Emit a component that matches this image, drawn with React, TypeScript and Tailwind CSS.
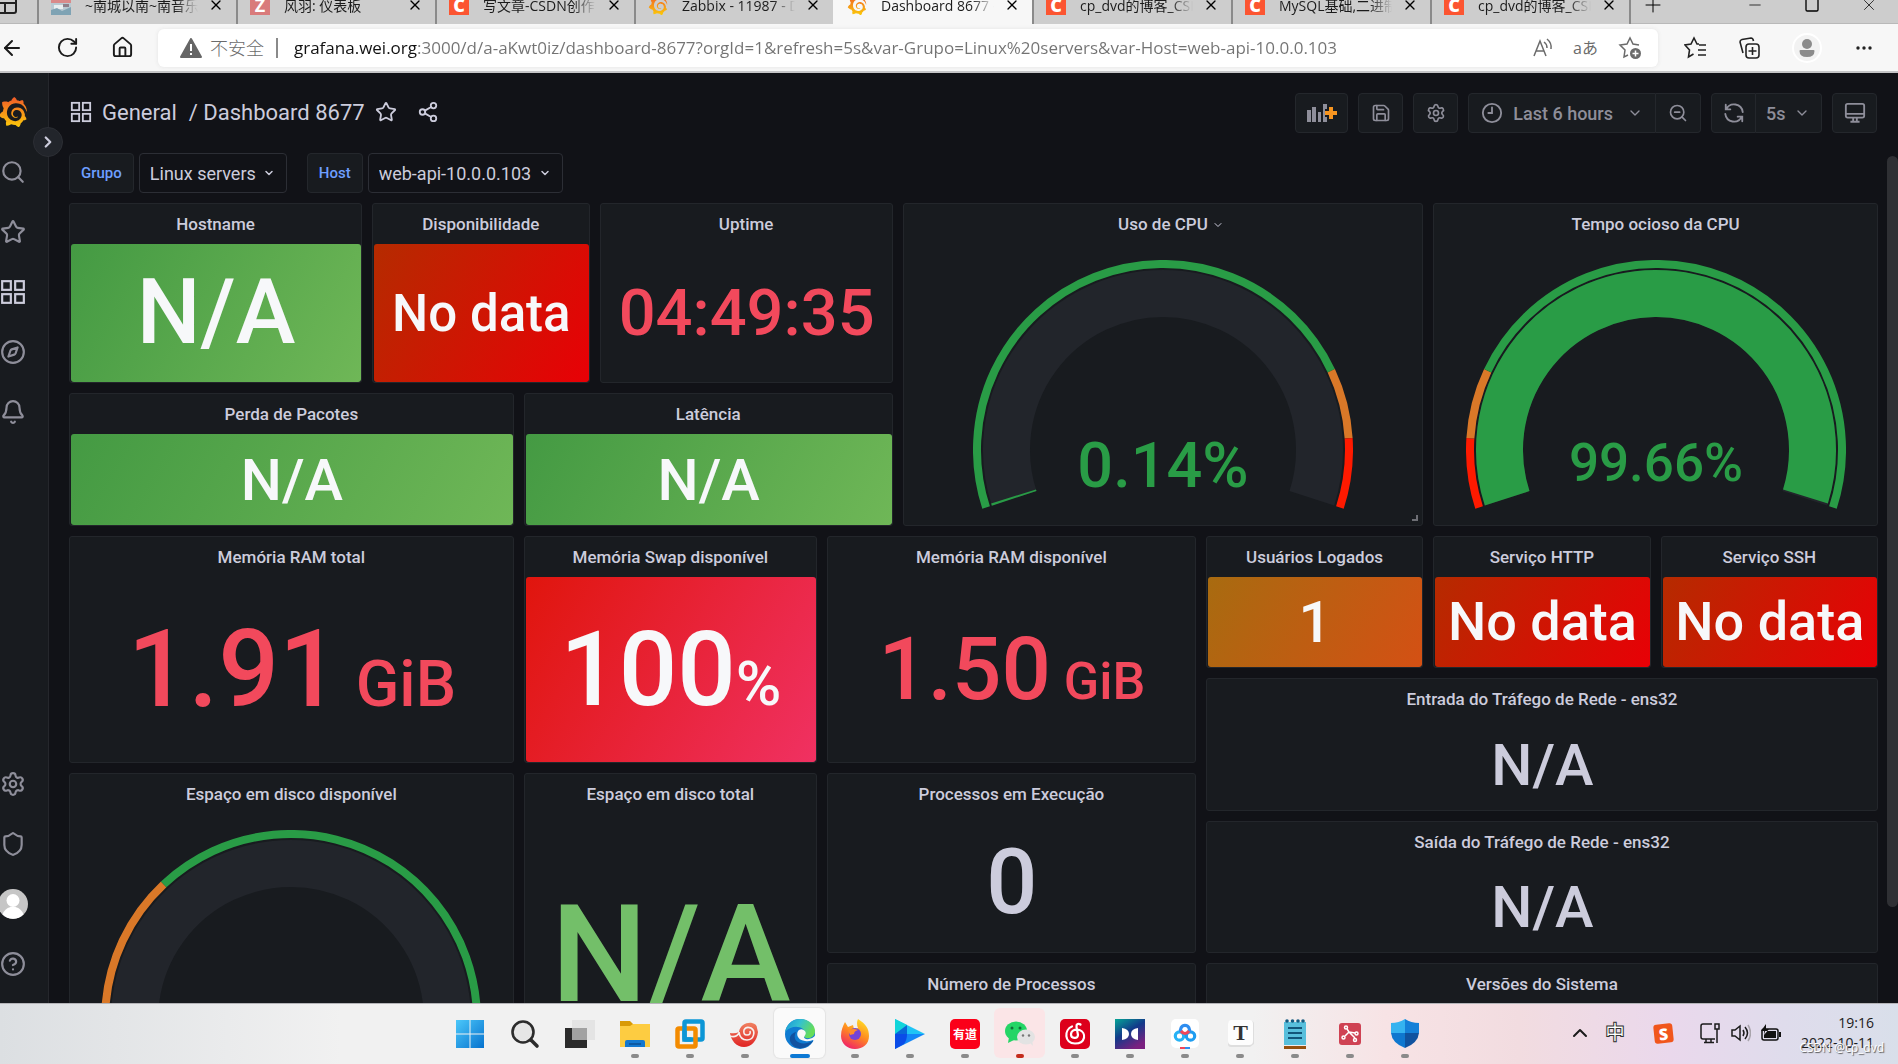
import React, { useState } from "react";
import clsx from "clsx";
import {
  ArrowLeft,
  Bell,
  ChevronDown,
  ChevronRight,
  ChevronUp,
  CircleHelp,
  Compass,
  House,
  Minus,
  Plus,
  RotateCw,
  Save,
  Search,
  Settings,
  Share2,
  Shield,
  Square,
  Star,
  X,
  ZoomOut,
} from "lucide-react";
import { SiGrafana } from "react-icons/si";

const GREEN = "#299c46";
const ORANGE = "#d97828";
const RED = "#ff1a00";

const UI_FONT = "font-['Open_Sans','Noto_Sans_CJK_SC',sans-serif]";

/* ---------- browser ---------- */

const GrafanaLogo = ({ className }: { className?: string }) => (
  <SiGrafana className={className} fill="url(#grafana-gradient)" />
);

const CsdnLogo = () => (
  <span className="flex size-5 items-center justify-center bg-[#fc5531] text-lg leading-none font-extrabold text-white">
    C
  </span>
);

const ZabbixLogo = () => (
  <span className="flex size-5 items-center justify-center bg-[#d97b7b] text-lg leading-none font-bold text-white">
    Z
  </span>
);

const PictureLogo = () => (
  <svg viewBox="0 0 20 20" className="size-5">
    <rect width="20" height="20" fill="#b9c9d2" />
    <path d="M0 5h20v3H0z" fill="#d98a8a" />
    <path d="M3 10h9v4H3z" fill="#e8eef0" />
    <path d="M0 15l6-2 5 3 9-4v8H0z" fill="#7fa3b4" />
    <path d="M12 9h6v3h-6z" fill="#8f7f8a" />
  </svg>
);

interface ITab {
  title: string;
  icon: React.ReactNode;
  active?: boolean;
}

const tabs: ITab[] = [
  { title: "~南城以南~南音乐", icon: <PictureLogo /> },
  { title: "风羽: 仪表板", icon: <ZabbixLogo /> },
  { title: "写文章-CSDN创作", icon: <CsdnLogo /> },
  { title: "Zabbix - 11987 - D", icon: <GrafanaLogo className="size-5" /> },
  { title: "Dashboard 8677 - G", icon: <GrafanaLogo className="size-5" />, active: true },
  { title: "cp_dvd的博客_CSD", icon: <CsdnLogo /> },
  { title: "MySQL基础,二进制", icon: <CsdnLogo /> },
  { title: "cp_dvd的博客_CSD", icon: <CsdnLogo /> },
];

const Tab = ({ title, icon, active }: ITab) => (
  <div
    className={clsx(
      "flex h-[38px] w-[199px] min-w-0 items-center border-l-2 px-3",
      active ? "border-[#f7f7f7] bg-[#f7f7f7]" : "border-[#8a8a8a] bg-[#cdcdcd]"
    )}
  >
    {icon}
    <span className="ml-3.5 min-w-0 flex-1 overflow-hidden text-[14px] whitespace-nowrap text-[#1b1b1b] [mask-image:linear-gradient(to_right,black_80%,transparent)]">
      {title}
    </span>
    <button type="button" aria-label="关闭标签页" className="ml-2.5">
      <X className="size-4" strokeWidth={2} />
    </button>
  </div>
);

const TabStrip = () => (
  <div className="flex h-6 items-end justify-between overflow-hidden bg-[#cdcdcd] shadow-[inset_0_-1px_0_#b9b9b9]">
    <div className="flex items-end">
      <button type="button" aria-label="标签页" className="flex h-[38px] w-[37px] items-center">
        <svg viewBox="0 0 20 20" className="size-5" fill="none" stroke="#222" strokeWidth="2">
          <rect x="-2" y="3" width="18" height="15" rx="2" />
          <path d="M5 8v10M-2 8h18" />
        </svg>
      </button>
      {tabs.map((tab, index) => (
        <Tab key={index} {...tab} />
      ))}
      <button
        type="button"
        aria-label="新建标签页"
        className="flex h-[38px] items-center border-l-2 border-[#8a8a8a] pl-2.5"
      >
        <Plus className="size-6" strokeWidth={1} />
      </button>
    </div>
    <div className="flex h-[38px] items-center gap-10 pr-5 text-black">
      <button type="button" aria-label="最小化">
        <Minus className="size-[18px]" strokeWidth={1} />
      </button>
      <button type="button" aria-label="最大化">
        <Square className="size-4" strokeWidth={2} />
      </button>
      <button type="button" aria-label="关闭">
        <X className="size-[18px]" strokeWidth={1} />
      </button>
    </div>
  </div>
);

const AddressBar = () => {
  const [url, setUrl] = useState<string>(
    "grafana.wei.org:3000/d/a-aKwt0iz/dashboard-8677?orgId=1&refresh=5s&var-Grupo=Linux%20servers&var-Host=web-api-10.0.0.103"
  );

  return (
    <div className="flex h-[49px] items-center border-b-2 border-[#c4c4c6] bg-[#f7f7f7] pr-[22px] text-[#1b1b1b]">
      <div className="flex w-[158px] shrink-0 items-center gap-8">
        <button type="button" aria-label="后退">
          <ArrowLeft className="size-6" strokeWidth={2} />
        </button>
        <button type="button" aria-label="刷新">
          <RotateCw className="size-[23px]" strokeWidth={2} />
        </button>
        <button type="button" aria-label="主页">
          <House className="size-[23px]" strokeWidth={2} />
        </button>
      </div>

      <div className="flex h-[38px] min-w-0 flex-1 items-center rounded-md bg-white pr-4 pl-[22px] text-[#6b6b6b] shadow-[0_0_4px_#e4e4e4]">
        <svg viewBox="0 0 22 20" className="h-5 w-[22px]">
          <path d="M11 1L21 19H1z" fill="#666" stroke="#666" strokeWidth="2" strokeLinejoin="round" />
          <path d="M11 6v7M11 15v2" stroke="#fff" strokeWidth="2" />
        </svg>
        <span className="ml-2 text-lg font-light whitespace-nowrap">不安全</span>
        <span className="ml-3 h-5 w-0.5 bg-[#8a8a8a]" />
        <input
          aria-label="地址"
          value={url}
          onChange={(e) => setUrl(e.target.value)}
          className="ml-4 min-w-0 flex-1 bg-[linear-gradient(to_right,#111_123px,#737373_123px)] bg-clip-text text-[17px] text-transparent outline-none"
        />
        <div className="flex items-center gap-5">
          <button type="button" aria-label="大声朗读">
            <svg viewBox="0 0 20 20" className="size-5" fill="none" stroke="#6b6b6b" strokeWidth="1.5">
              <path d="M1 18L7 3l6 15M3 13h8" />
              <path d="M11 4q3 2 3 6M14 1q5 4 4 10" />
            </svg>
          </button>
          <button type="button" aria-label="翻译" className="text-base">
            aあ
          </button>
          <button type="button" aria-label="收藏">
            <svg viewBox="0 0 24 24" className="size-6" fill="none" stroke="#6b6b6b" strokeWidth="1.5">
              <path d="M21 9l-6-1-3-6-3 6-7 1 5 5-1 7 4-2" />
              <circle cx="17.500" cy="17.500" r="5.500" fill="#6b6b6b" stroke="none" />
              <path d="M17.500 14.500v6M14.500 17.500h6" stroke="#fff" />
            </svg>
          </button>
        </div>
      </div>

      <div className="ml-[26px] flex shrink-0 items-center gap-[30px]">
        <button type="button" aria-label="收藏夹">
          <svg viewBox="0 0 24 24" className="size-6" fill="none" stroke="#222" strokeWidth="1.600">
            <path d="M15 8l-2-0-3-6-3 6-6 1 4.500 5-1 7 5-3" />
            <path d="M15 9h7M14 14h8M14 19h8" />
          </svg>
        </button>
        <button type="button" aria-label="集锦">
          <svg viewBox="0 0 24 24" className="size-6" fill="none" stroke="#222" strokeWidth="1.600">
            <rect x="8" y="8" width="13" height="14" rx="3" />
            <path d="M14.500 11v8M10.500 15h8M5 17L2 6q0-2 2-2.500L13 2q2 0 2.500 3" />
          </svg>
        </button>
        <button
          type="button"
          aria-label="用户"
          className="flex size-[30px] items-center justify-center rounded-full border-2 border-white bg-[#f2f2f2]"
        >
          <svg viewBox="0 0 20 20" className="size-5" fill="#8b8b8b">
            <circle cx="10" cy="6" r="5" />
            <path d="M2.500 13q0-1 1-1h13q1 0 1 1 0 6-7.500 6t-7.500-6z" />
          </svg>
        </button>
        <button type="button" aria-label="设置及其他">
          <svg viewBox="0 0 24 24" className="size-6" fill="#222">
            <circle cx="6" cy="12" r="1.700" />
            <circle cx="12" cy="12" r="1.700" />
            <circle cx="18" cy="12" r="1.700" />
          </svg>
        </button>
      </div>
    </div>
  );
};

/* ---------- dashboard ---------- */

const AppsIcon = ({ className }: { className?: string }) => (
  <svg viewBox="0 0 24 24" className={className} fill="none" stroke="currentColor" strokeWidth="2">
    <rect x="2" y="2" width="8" height="8" />
    <rect x="14" y="2" width="8" height="8" />
    <rect x="2" y="14" width="8" height="8" />
    <rect x="14" y="14" width="8" height="8" />
  </svg>
);

const Sidebar = () => (
  <nav className="relative flex w-[49px] shrink-0 flex-col justify-between border-r border-[#25272c] bg-[#181b1f] pt-6 pb-[26px] text-[#8e8e9a]">
    <div className="flex w-[26px] flex-col items-center gap-[34px]">
      <a href="#home" aria-label="Home">
        <GrafanaLogo className="-mb-0.5 size-[30px]" />
      </a>
      <a href="#search" aria-label="Search"><Search className="size-[26px]" /></a>
      <a href="#starred" aria-label="Starred"><Star className="size-[26px]" /></a>
      <a href="#dashboards" aria-label="Dashboards"><AppsIcon className="size-[26px] text-[#ccccdc]" /></a>
      <a href="#explore" aria-label="Explore"><Compass className="size-[26px]" /></a>
      <a href="#alerting" aria-label="Alerting"><Bell className="size-[26px]" /></a>
    </div>
    <div className="flex w-[26px] flex-col items-center gap-[34px]">
      <a href="#config" aria-label="Configuration"><Settings className="size-[26px]" /></a>
      <a href="#admin" aria-label="Server admin"><Shield className="size-[26px]" /></a>
      <a href="#profile" aria-label="Profile">
        <svg viewBox="0 0 30 30" className="-m-0.5 size-[30px]">
          <circle cx="15" cy="15" r="15" fill="#c6c6c6" />
          <circle cx="15" cy="11.500" r="6.500" fill="#fff" />
          <path d="M4.500 25.500q2-6 8-7.500h5q6 1.500 8 7.500A15 15 0 0 1 4.500 25.500z" fill="#fff" />
        </svg>
      </a>
      <a href="#help" aria-label="Help"><CircleHelp className="size-[26px]" /></a>
    </div>
    <button
      type="button"
      aria-label="Expand menu"
      className="absolute top-[54px] -right-[15px] flex size-[30px] items-center justify-center rounded-full border border-[#2c2e34] bg-[#22252b] text-[#ccccdc]"
    >
      <ChevronRight className="size-[18px]" strokeWidth={3} />
    </button>
  </nav>
);

const toolButton =
  "flex h-10 items-center justify-center rounded-sm border border-[#24272c] bg-[#181b1f] text-[#8e8e9a]";

const Toolbar = () => (
  <header className="flex h-20 items-center justify-between text-[#ccccdc]">
    <div className="flex items-center pb-0.5">
      <AppsIcon className="ml-px size-[22px]" />
      <h1 className="ml-2.5 flex gap-3 text-[22px]">
        <a href="#general">General</a>
        <span>/ Dashboard 8677</span>
      </h1>
      <button type="button" aria-label="Mark as favorite" className="ml-2.5">
        <Star className="size-[22px]" />
      </button>
      <button type="button" aria-label="Share dashboard" className="ml-5">
        <Share2 className="size-[22px]" />
      </button>
    </div>

    <div className="flex gap-2.5 pr-px text-[18px] font-medium">
      <button type="button" aria-label="Add panel" className={clsx(toolButton, "w-[53px]")}>
        <svg viewBox="0 0 32 20" className="h-5 w-8" fill="currentColor">
          <path d="M1 7h4v12H1zM6 4h4v15H6zM12 9h3v10h-3zM17 1h4v5h-2v8h2v5h-4z" />
          <path d="M23 4h4v4h4v4h-4v4h-4v-4h-4V8h4z" fill="#f79520" />
        </svg>
      </button>
      <button type="button" aria-label="Save dashboard" className={clsx(toolButton, "w-[45px]")}>
        <Save className="size-5" />
      </button>
      <button type="button" aria-label="Dashboard settings" className={clsx(toolButton, "w-[45px]")}>
        <Settings className="size-5" />
      </button>
      <div className="flex">
        <button type="button" className={clsx(toolButton, "rounded-r-none px-3")}>
          <svg viewBox="0 0 24 24" className="size-[22px]" fill="none" stroke="currentColor" strokeWidth="2">
            <circle cx="12" cy="12" r="10" />
            <path d="M12 6v6H8" strokeLinecap="round" />
          </svg>
          <span className="ml-2.5">Last 6 hours</span>
          <ChevronDown className="ml-3.5 size-4" />
        </button>
        <button type="button" aria-label="Zoom out" className={clsx(toolButton, "w-[45px] rounded-l-none border-l-0")}>
          <ZoomOut className="size-5" />
        </button>
      </div>
      <div className="flex">
        <button type="button" aria-label="Refresh dashboard" className={clsx(toolButton, "w-[45px] rounded-r-none")}>
          <svg viewBox="0 0 24 24" className="size-[22px]" fill="none" stroke="currentColor" strokeWidth="2" strokeLinecap="round">
            <path d="M3 3v5h5M3.500 8A9.500 9.500 0 0 1 21.500 11M21 21v-5h-5M20.500 16A9.500 9.500 0 0 1 2.500 13" />
          </svg>
        </button>
        <label className="relative flex items-center">
          <select
            aria-label="Refresh interval"
            className={clsx(toolButton, "w-[66px] appearance-none rounded-l-none border-l-0 pl-2.5")}
          >
            <option>5s</option>
          </select>
          <ChevronDown className="pointer-events-none absolute right-3 size-4 text-[#8e8e9a]" />
        </label>
      </div>
      <button type="button" aria-label="Cycle view mode" className={clsx(toolButton, "w-[45px]")}>
        <svg viewBox="0 0 24 24" className="size-[22px]" fill="none" stroke="currentColor" strokeWidth="2">
          <rect x="2" y="2" width="20" height="15" rx="2" />
          <path d="M2 13h20M10 17v4M14 17v4M7 21.500h10" />
        </svg>
      </button>
    </div>
  </header>
);

const Variable = ({ id, label, value }: { id: string; label: string; value: string }) => (
  <div className="flex gap-[5px]">
    <label
      htmlFor={id}
      className="flex h-10 items-center rounded-sm border border-[#24272c] bg-[#181b1f] px-[11px] text-[15px] font-medium text-[#6e9fff]"
    >
      {label}
    </label>
    <div className="relative flex items-center">
      <select
        id={id}
        className="h-10 appearance-none rounded-sm border border-[#2c2e35] bg-[#111217] pr-[30px] pl-2.5 text-[18px] text-[#ccccdc]"
      >
        <option>{value}</option>
      </select>
      <ChevronDown className="pointer-events-none absolute right-3 size-3 text-[#ccccdc]" strokeWidth={3} />
    </div>
  </div>
);

interface IPanelProps {
  title: string;
  area: string;
  hovered?: boolean;
  children?: React.ReactNode;
}

const Panel = ({ title, area, hovered, children }: IPanelProps) => (
  <section
    className={clsx(
      "relative flex min-w-0 flex-col overflow-hidden rounded-[3px] border border-[#23262b] bg-[#181b1f] text-[#ccccdc]",
      area
    )}
  >
    <h2 className="flex h-10 shrink-0 items-center justify-center gap-1 pt-0.5 text-[17px] font-medium whitespace-nowrap">
      {title}
      {hovered && <ChevronDown className="-mr-4 size-3" />}
    </h2>
    {children}
    {hovered && (
      <span className="absolute right-1 bottom-1 size-1.5 border-r-2 border-b-2 border-[#6d6e74]" />
    )}
  </section>
);

const Stat = ({ className, children }: { className: string; children: React.ReactNode }) => (
  <div
    className={clsx(
      "ml-px flex flex-1 items-center justify-center rounded-[3px] leading-none font-medium whitespace-nowrap",
      className
    )}
  >
    <span>{children}</span>
  </div>
);

const greenFill = "bg-[linear-gradient(120deg,#449a43,#6fb757)] text-[#f7f8fa]";
const redFill = "bg-[linear-gradient(120deg,#b52b00,#e80006)] text-[#f7f8fa]";
const swapFill = "bg-[linear-gradient(120deg,#e0150d,#f03162)] text-[#f7f8fa]";
const orangeFill = "bg-[linear-gradient(120deg,#a86b10,#d45014)] text-[#f7f8fa]";

// the dial sweeps 216 degrees, starting 18 degrees under the horizontal
const point = (radius: number, ratio: number) => {
  const angle = ((ratio * 216 - 198) * Math.PI) / 180;
  return `${(190 + radius * Math.cos(angle)).toFixed(2)} ${(190 + radius * Math.sin(angle)).toFixed(2)}`;
};

const arc = (radius: number, from: number, to: number) =>
  `M${point(radius, from)}A${radius} ${radius} 0 ${(to - from) * 216 > 180 ? 1 : 0} 1 ${point(radius, to)}`;

interface IGaugeProps {
  value: number;
  label?: string;
  labelClass?: string;
  labelY?: number;
  steps: { from: number; to: number; color: string }[];
}

const Gauge = ({ value, label, labelClass, labelY, steps }: IGaugeProps) => (
  <div className="flex flex-1 items-center justify-center">
    <svg viewBox="0 0 380 249" className="h-[249px] w-[380px]" fill="none">
      <path d={arc(156.5, 0, 1)} stroke="#22252b" strokeWidth="47" />
      {value > 0 && <path d={arc(156.5, 0, value)} stroke={GREEN} strokeWidth="47" />}
      {steps.map((step) => (
        <path key={step.from} d={arc(186, step.from, step.to)} stroke={step.color} strokeWidth="8" />
      ))}
      <text x="190" y={labelY} textAnchor="middle" fill={GREEN} className={labelClass}>
        {label}
      </text>
    </svg>
  </div>
);

const Dashboard = () => (
  <div className="grid grid-cols-24 grid-rows-[repeat(10,38px_37px)] gap-2.5">
    <Panel title="Hostname" area="col-start-1 col-span-4 row-start-1 row-span-4">
      <Stat className={clsx(greenFill, "text-[90px]")}>N/A</Stat>
    </Panel>
    <Panel title="Disponibilidade" area="col-start-5 col-span-3 row-start-1 row-span-4">
      <Stat className={clsx(redFill, "text-[51px]")}>No data</Stat>
    </Panel>
    <Panel title="Uptime" area="col-start-8 col-span-4 row-start-1 row-span-4">
      <Stat className="text-[65px] text-[#f2495c]">04:49:35</Stat>
    </Panel>
    <Panel title="Perda de Pacotes" area="col-start-1 col-span-6 row-start-5 row-span-3">
      <Stat className={clsx(greenFill, "text-[58px]")}>N/A</Stat>
    </Panel>
    <Panel title="Latência" area="col-start-7 col-span-5 row-start-5 row-span-3">
      <Stat className={clsx(greenFill, "text-[58px]")}>N/A</Stat>
    </Panel>
    <Panel title="Uso de CPU" hovered area="col-start-12 col-span-7 row-start-1 row-span-7">
      <Gauge
        value={0.0034}
        label="0.14%"
        labelClass="text-[63px] font-medium"
        labelY={227}
        steps={[
          { from: 0, to: 0.8, color: GREEN },
          { from: 0.8, to: 0.9, color: ORANGE },
          { from: 0.9, to: 1, color: RED },
        ]}
      />
    </Panel>
    <Panel title="Tempo ocioso da CPU" area="col-start-19 col-span-6 row-start-1 row-span-7">
      <Gauge
        value={0.9966}
        label="99.66%"
        labelClass="text-[53px] font-medium"
        labelY={221}
        steps={[
          { from: 0, to: 0.1, color: RED },
          { from: 0.1, to: 0.2, color: ORANGE },
          { from: 0.2, to: 1, color: GREEN },
        ]}
      />
    </Panel>

    <Panel title="Memória RAM total" area="col-start-1 col-span-6 row-start-8 row-span-5">
      <Stat className="text-[107px] text-[#f2495c]">
        1.91<span className="text-[64px]"> GiB</span>
      </Stat>
    </Panel>
    <Panel title="Memória Swap disponível" area="col-start-7 col-span-4 row-start-8 row-span-5">
      <Stat className={clsx(swapFill, "text-[103px]")}>
        100<span className="text-[62px]">%</span>
      </Stat>
    </Panel>
    <Panel title="Memória RAM disponível" area="col-start-11 col-span-5 row-start-8 row-span-5">
      <Stat className="text-[87px] text-[#f2495c]">
        1.50<span className="text-[52px]"> GiB</span>
      </Stat>
    </Panel>
    <Panel title="Usuários Logados" area="col-start-16 col-span-3 row-start-8 row-span-3">
      <Stat className={clsx(orangeFill, "text-[58px]")}>1</Stat>
    </Panel>
    <Panel title="Serviço HTTP" area="col-start-19 col-span-3 row-start-8 row-span-3">
      <Stat className={clsx(redFill, "text-[54px]")}>No data</Stat>
    </Panel>
    <Panel title="Serviço SSH" area="col-start-22 col-span-3 row-start-8 row-span-3">
      <Stat className={clsx(redFill, "text-[54px]")}>No data</Stat>
    </Panel>
    <Panel title="Entrada do Tráfego de Rede - ens32" area="col-start-16 col-span-9 row-start-11 row-span-3">
      <Stat className="text-[58px]">N/A</Stat>
    </Panel>

    <Panel title="Espaço em disco disponível" area="col-start-1 col-span-6 row-start-13 row-span-7">
      <Gauge
        value={0}
        steps={[
          { from: 0, to: 0.1, color: RED },
          { from: 0.1, to: 0.3, color: ORANGE },
          { from: 0.3, to: 1, color: GREEN },
        ]}
      />
    </Panel>
    <Panel title="Espaço em disco total" area="col-start-7 col-span-4 row-start-13 row-span-7">
      <Stat className="text-[136px] text-[#73bf69]">N/A</Stat>
    </Panel>
    <Panel title="Processos em Execução" area="col-start-11 col-span-5 row-start-13 row-span-4">
      <Stat className="text-[90px]">0</Stat>
    </Panel>
    <Panel title="Saída do Tráfego de Rede - ens32" area="col-start-16 col-span-9 row-start-14 row-span-3">
      <Stat className="text-[58px]">N/A</Stat>
    </Panel>
    <Panel title="Número de Processos" area="col-start-11 col-span-5 row-start-17 row-span-3" />
    <Panel title="Versões do Sistema" area="col-start-16 col-span-9 row-start-17 row-span-3" />
  </div>
);

/* ---------- taskbar ---------- */

const taskIcons: { name: string; mark?: "idle" | "active" | "alert"; icon: React.ReactNode }[] = [
  {
    name: "开始",
    icon: (
      <path d="M1 1h13.500v13.500H1zM15.500 1H29v13.500H15.500zM1 15.500h13.500V29H1zM15.500 15.500H29V29H15.500z" fill="url(#win)" />
    ),
  },
  {
    name: "搜索",
    icon: (
      <g fill="none" stroke="#2c2c2c" strokeLinecap="round">
        <circle cx="13" cy="13" r="10.500" strokeWidth="2.600" fill="#e6e6e6" />
        <path d="M21 21l6 6" strokeWidth="3.600" />
      </g>
    ),
  },
  {
    name: "任务视图",
    icon: (
      <>
        <path d="M0 9h22v20H0z" fill="#2b2b2b" />
        <path d="M7 1h23v20H7z" fill="#e2e2e2" fillOpacity=".9" />
        <path d="M7 9h15v12H7z" fill="#a2a2a2" />
      </>
    ),
  },
  {
    name: "文件资源管理器",
    mark: "idle",
    icon: (
      <>
        <path d="M0 2h10l3 3v6H0z" fill="#d99a06" />
        <path d="M0 7h10l3-2h17v23H0z" fill="#fdcc41" />
        <path d="M5 28v-5q0-2 2-2h16q2 0 2 2v5z" fill="#1378cf" />
        <path d="M9 25h12" stroke="#0b4f93" strokeWidth="1.500" />
      </>
    ),
  },
  {
    name: "VMware Workstation",
    mark: "idle",
    icon: (
      <g fill="none" strokeWidth="4.500">
        <rect x="9.500" y="2.500" width="18" height="18" rx="1.500" stroke="#0c96d6" />
        <rect x="2.500" y="9.500" width="18" height="18" rx="1.500" stroke="#f38b00" />
        <path d="M9.500 7v13.500h7" stroke="#0c96d6" />
      </g>
    ),
  },
  {
    name: "Nautilus",
    mark: "idle",
    icon: (
      <>
        <path d="M0 14q5 1 9-1c1-7 8-10 13-9q5 1 5 5l1 4c-1 9-7 15-14 15C6 28 1 21 0 14z" fill="url(#shell)" />
        <path d="M9 13q1 8 8 8c7 0 9-9 4-12q-5-2-7 2-1 5 3 5 4 0 3-4M0 17q6 2 9-3" fill="none" stroke="#f7f1f0" strokeWidth="1.600" />
      </>
    ),
  },
  {
    name: "Microsoft Edge",
    mark: "active",
    icon: (
      <>
        <circle cx="15" cy="15" r="15" fill="#0f7bd1" />
        <path d="M0 13C2 4 8 0 15 0c9 0 15 6 15 12 0 5-4 8-9 7-3-1-2-3-1-5 0-6-12-10-20-1z" fill="url(#edge)" />
        <path d="M11 13c-5 9 5 15 17 9-6 9-19 10-23 0-1-5 2-8 6-9z" fill="#1152a0" />
        <path d="M14 11c-3 2-3 10 6 11 4 1 7-1 8-1l2 2v-6q-4 4-9 3c-5-2 2-4-1-8q-3-3-6-1z" fill="#f8f8f8" />
      </>
    ),
  },
  {
    name: "Firefox",
    mark: "idle",
    icon: (
      <>
        <path d="M18 0c8 5 11 10 11 17 0 8-6 13-14 13S1 24 1 17C1 11 3 7 5 3l3 5 5-2 1 4 4-1q-2-5 0-9z" fill="url(#fox)" />
        <circle cx="15" cy="15" r="6" fill="#7443d6" />
        <path d="M8 11q6-2 10 0-4 1-4 4l-4 1z" fill="#ff8a2b" />
      </>
    ),
  },
  {
    name: "播放器",
    mark: "idle",
    icon: (
      <>
        <path d="M0 0l30 15H0z" fill="#1fc4f5" />
        <path d="M0 15h30L0 30z" fill="#1487f7" />
        <path d="M0 0l12 6q0 9-12 9z" fill="#11d5da" />
        <path d="M0 15h12q0 6-3 10l-9 5z" fill="#0a4ce8" />
        <path d="M0 15l12-9v9z" fill="#0868d8" />
      </>
    ),
  },
  {
    name: "有道词典",
    mark: "idle",
    icon: (
      <>
        <rect width="30" height="30" rx="5" fill="#fb0019" />
        <text x="15" y="19.500" textAnchor="middle" fill="#fff" className="text-[12px] font-bold">
          有道
        </text>
      </>
    ),
  },
  {
    name: "微信",
    mark: "alert",
    icon: (
      <>
        <ellipse cx="11" cy="12" rx="11" ry="9.500" fill="#25d566" />
        <path d="M4 18l-1 6 6-3z" fill="#25d566" />
        <circle cx="7" cy="9" r="1.500" fill="#11723a" />
        <circle cx="15" cy="9" r="1.500" fill="#11723a" />
        <ellipse cx="21" cy="18" rx="9" ry="7.500" fill="#e3e3e3" />
        <path d="M24 23l4 4-1-6z" fill="#e3e3e3" />
        <circle cx="18" cy="16.500" r="1.200" fill="#777" />
        <circle cx="24" cy="16.500" r="1.200" fill="#777" />
      </>
    ),
  },
  {
    name: "网易云音乐",
    mark: "idle",
    icon: (
      <>
        <rect width="30" height="30" rx="5" fill="#dd001b" />
        <g fill="none" stroke="#fff" strokeWidth="2.200" strokeLinecap="round">
          <path d="M12 7.500C4 10.500 4 24.500 15 24.500c11 0 11.500-11 4.500-13.500-5-1.500-8.500 1-8.500 4.500 0 4 6.500 5 7 .500L16.500 8c-.500-3 2-4 4-2.500" />
        </g>
      </>
    ),
  },
  {
    name: "笔记",
    mark: "idle",
    icon: (
      <>
        <path d="M0 0h30v30H0z" fill="url(#note)" />
        <path d="M7 9q7 1 7 6t-7 6zM23 9q-7 1-7 6t7 6z" fill="#fff" />
      </>
    ),
  },
  {
    name: "百度网盘",
    mark: "idle",
    icon: (
      <>
        <rect x="1" width="28" height="29" rx="5" fill="#fff" />
        <g fill="none" strokeWidth="3.200">
          <circle cx="9.500" cy="17" r="4.200" stroke="#27b2f5" />
          <circle cx="20.500" cy="17" r="4.200" stroke="#1f9df0" />
          <path d="M11 13a4.500 4.500 0 1 1 8 0" stroke="#2e8df0" />
          <path d="M11 12q4 5 8 0" stroke="#f2465a" />
        </g>
        <path d="M10 28h5v2h-5z" fill="#f2465a" />
        <path d="M15 28h5v2h-5z" fill="#2e8df0" />
      </>
    ),
  },
  {
    name: "Typora",
    mark: "idle",
    icon: (
      <>
        <path d="M3 5q0-3 3-3h20q3 0 3 3v20l-4 3H6q-3 0-3-3z" fill="#dedede" />
        <rect x="3" y="1" width="25" height="25" rx="4" fill="#fdfdfd" />
        <text x="15.500" y="21" textAnchor="middle" fill="#333" className="font-['Liberation_Serif',serif] text-[22px] font-bold">
          T
        </text>
      </>
    ),
  },
  {
    name: "记事本",
    mark: "idle",
    icon: (
      <>
        <path d="M4 27h22v3H4z" fill="#96500f" />
        <path d="M4 3h22v23H4z" fill="#58bfdc" />
        <path d="M8 9h14M8 14h14M8 19h14" stroke="#12567a" strokeWidth="2" />
        <g fill="#135a80">
          <circle cx="7" cy="2" r="1.800" />
          <circle cx="12.500" cy="2" r="1.800" />
          <circle cx="18" cy="2" r="1.800" />
          <circle cx="23" cy="2" r="1.800" />
        </g>
      </>
    ),
  },
  {
    name: "Xmanager",
    mark: "idle",
    icon: (
      <>
        <rect x="4" y="4" width="22" height="22" rx="3" fill="#cf4253" />
        <g fill="none" stroke="#fff" strokeWidth="1.500">
          <path d="M12 10l2 3 6 6M14 13l-4 4M14 13l6 1" />
          <circle cx="11" cy="8.500" r="1.500" />
          <circle cx="8.500" cy="18.500" r="1.500" />
          <circle cx="21.500" cy="14.500" r="1.500" />
          <circle cx="20" cy="21" r="1.500" />
        </g>
      </>
    ),
  },
  {
    name: "Windows 安全中心",
    mark: "idle",
    icon: (
      <>
        <path d="M15 0Q9 4 1 4v10h14z" fill="#35b3f0" />
        <path d="M15 0q6 4 14 4v10H15z" fill="#1580d8" />
        <path d="M1 14h14v15Q2 24 1 14z" fill="#0f77cf" />
        <path d="M29 14H15v15q13-5 14-15z" fill="#10529f" />
      </>
    ),
  },
];

const Taskbar = () => (
  <footer className="relative z-10 flex h-[61px] shrink-0 items-center border-t border-[#b4b4b8] bg-[linear-gradient(to_right,#dcdfe2,#f1f1f1_18%,#f1f1f1_66%,#f7e3e5_73%,#f2dce0_80%,#ead8ec_88%,#dfdcec_94%,#d9dfea)] pr-6 pb-0.5 text-[#1b1b1b]">
    <div className="flex-1" />
    <div className="flex">
      {taskIcons.map(({ name, mark, icon }) => (
        <button
          key={name}
          type="button"
          aria-label={name}
          className={clsx(
            "mx-0.5 flex h-[50px] w-[51px] flex-col items-center rounded-md pt-[11px]",
            mark === "active" && "bg-[#fafafa] shadow-[0_0_1px_1px_#e3e3e3]",
            mark === "alert" && "bg-[#fbe5e7]"
          )}
        >
          <svg viewBox="0 0 30 30" className="size-[30px] overflow-visible">
            {icon}
          </svg>
          {mark && (
            <span
              className={clsx(
                "mt-[5px] h-1 rounded-full",
                mark === "active" ? "w-5 bg-[#0b78d4]" : "w-2",
                mark === "idle" && "bg-[#8a8a8a]",
                mark === "alert" && "bg-[#c42b1c]"
              )}
            />
          )}
        </button>
      ))}
    </div>
    <div className="flex flex-1 items-center justify-end gap-2.5">
      <button type="button" aria-label="显示隐藏的图标">
        <ChevronUp className="size-6" strokeWidth={2} />
      </button>
      <span className="w-[26px] text-center text-[20px] leading-6 font-bold text-white [-webkit-text-stroke:1px_#333]">
        中
      </span>
      <span className="mx-4 flex size-[19px] -rotate-6 items-center justify-center rounded-[3px] bg-[#f1561c] text-base leading-none font-extrabold text-white">
        S
      </span>
      <svg viewBox="0 0 22 22" className="h-[22px] w-[22px]" fill="none" stroke="#1b1b1b" strokeWidth="1.500">
        <path d="M13 2H4Q2 2 2 4v11q0 2 2 2h12M7 17v3M12 17v3M5 20.500h10" />
        <path d="M16 2h4v5h-4zM18 7v14" />
      </svg>
      <svg viewBox="0 0 20 20" className="size-5" fill="none" stroke="#1b1b1b" strokeWidth="1.500">
        <path d="M1 7h3l5-4v14l-5-4H1z" />
        <path d="M12 7q2 3 0 6M14 4q5 6 0 12" />
        <path d="M17 2q5 8 0 16" stroke="#a9a4ac" />
      </svg>
      <svg viewBox="0 0 20 18" className="h-[18px] w-5">
        <rect x="1" y="5" width="16" height="11" rx="2" fill="none" stroke="#111" strokeWidth="1.500" />
        <path d="M3 7h12v7H3zM18 8h2v5h-2zM5 0L0 7h4l-1 4 5-6H5z" fill="#111" />
      </svg>
      <div className="relative ml-2.5 text-right text-[14px] leading-5">
        <div>19:16</div>
        <div>2022-10-11</div>
        <span className="absolute top-[27px] -right-2.5 text-[12px] leading-4 whitespace-nowrap text-white [text-shadow:1px_1px_1px_#555]">
          CSDN @cp_dvd
        </span>
      </div>
    </div>
  </footer>
);

const Gradients = () => (
  <svg className="absolute size-0" aria-hidden="true">
    <defs>
      <linearGradient id="grafana-gradient" x1="0" y1="0" x2="0" y2="1">
        <stop offset="0" stopColor="#f05a28" />
        <stop offset="1" stopColor="#fbca0a" />
      </linearGradient>
      <linearGradient id="win" x1="0" y1="0" x2="1" y2="1">
        <stop offset="0" stopColor="#4cc8fa" />
        <stop offset="1" stopColor="#0672ce" />
      </linearGradient>
      <linearGradient id="shell" x1="0" y1="0" x2="0" y2="1">
        <stop offset="0" stopColor="#f08060" />
        <stop offset="1" stopColor="#e02424" />
      </linearGradient>
      <linearGradient id="edge" x1="0" y1="0" x2="1" y2="0.4">
        <stop offset="0" stopColor="#1793d8" />
        <stop offset="0.5" stopColor="#34c1d0" />
        <stop offset="1" stopColor="#66dd58" />
      </linearGradient>
      <linearGradient id="fox" x1="0.8" y1="0" x2="0.3" y2="1">
        <stop offset="0" stopColor="#ffe226" />
        <stop offset="0.5" stopColor="#ff8a1f" />
        <stop offset="1" stopColor="#f0206a" />
      </linearGradient>
      <linearGradient id="note" x1="0" y1="0" x2="0.6" y2="1">
        <stop offset="0" stopColor="#05a596" />
        <stop offset="0.5" stopColor="#123a8a" />
        <stop offset="1" stopColor="#7a2080" />
      </linearGradient>
    </defs>
  </svg>
);

export default function App() {
  return (
    <div className={clsx("flex h-screen flex-col overflow-hidden bg-[#111217]", UI_FONT)}>
      <Gradients />
      <TabStrip />
      <AddressBar />
      <div className="flex min-h-0 flex-1 font-[Roboto,sans-serif]">
        <Sidebar />
        <main className="min-w-0 flex-1 overflow-hidden pl-5">
          <Toolbar />
          <div className="mb-2.5 flex gap-5">
            <Variable id="grupo" label="Grupo" value="Linux servers" />
            <Variable id="host" label="Host" value="web-api-10.0.0.103" />
          </div>
          <Dashboard />
        </main>
        <div className="flex w-5 shrink-0 flex-col items-end pt-[83px]">
          <div className="h-[751px] w-[11px] rounded-full bg-[#2f3034]" />
        </div>
      </div>
      <Taskbar />
    </div>
  );
}
